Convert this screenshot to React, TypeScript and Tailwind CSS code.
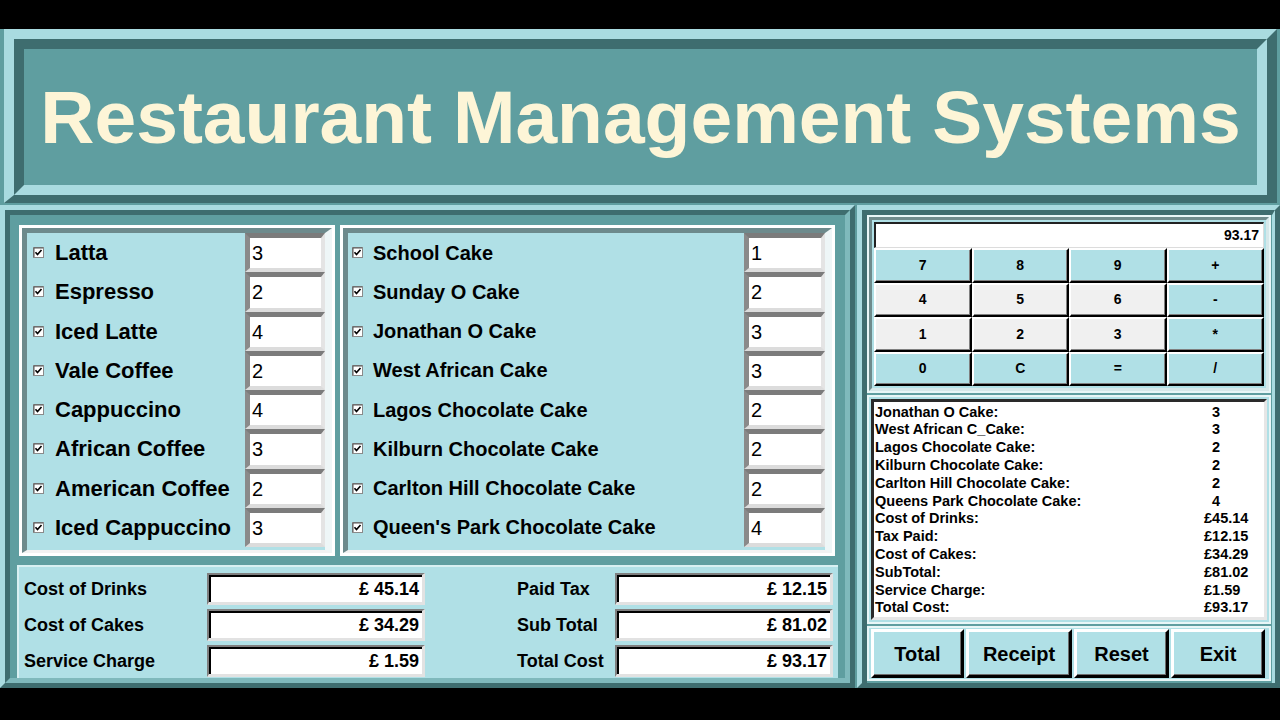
const drinks = [
  ['Latta', '3'],
  ['Espresso', '2'],
  ['Iced Latte', '4'],
  ['Vale Coffee', '2'],
  ['Cappuccino', '4'],
  ['African Coffee', '3'],
  ['American Coffee', '2'],
  ['Iced Cappuccino', '3'],
]

const cakes = [
  ['School Cake', '1'],
  ['Sunday O Cake', '2'],
  ['Jonathan O Cake', '3'],
  ['West African Cake', '3'],
  ['Lagos Chocolate Cake', '2'],
  ['Kilburn Chocolate Cake', '2'],
  ['Carlton Hill Chocolate Cake', '2'],
  ["Queen's Park Chocolate Cake", '4'],
]

const receipt = [
  ['Jonathan O Cake:', '3', true],
  ['West African C_Cake:', '3', true],
  ['Lagos Chocolate Cake:', '2', true],
  ['Kilburn Chocolate Cake:', '2', true],
  ['Carlton Hill Chocolate Cake:', '2', true],
  ['Queens Park Chocolate Cake:', '4', true],
  ['Cost of Drinks:', '£45.14', false],
  ['Tax Paid:', '£12.15', false],
  ['Cost of Cakes:', '£34.29', false],
  ['SubTotal:', '£81.02', false],
  ['Service Charge:', '£1.59', false],
  ['Total Cost:', '£93.17', false],
] as const

const calcKeys = [
  ['7', 'blue'],
  ['8', 'blue'],
  ['9', 'blue'],
  ['+', 'blue'],
  ['4', 'gray'],
  ['5', 'gray'],
  ['6', 'gray'],
  ['-', 'blue'],
  ['1', 'gray'],
  ['2', 'gray'],
  ['3', 'gray'],
  ['*', 'blue'],
  ['0', 'blue'],
  ['C', 'blue'],
  ['=', 'blue'],
  ['/', 'blue'],
]

const Tick = () => (
  <svg width="11" height="11" viewBox="0 0 11 11" className="shrink-0">
    <rect x="0.5" y="0.5" width="10" height="10" fill="#ffffff" stroke="#8a8a8a" />
    <path d="M1 1h9M1 1v9" stroke="#555" strokeWidth="1" />
    <path d="M2.5 5.2 L4.5 7.5 L8.5 3" fill="none" stroke="#000" strokeWidth="1.6" />
  </svg>
)

const QtyEntry = ({ value, w }: { value: string; w: string }) => (
  <div
    className={`${w} h-full shrink-0 border-t-[5px] border-l-[5px] border-b-[4px] border-r-[4px] border-t-[#7b7b7b] border-l-[#8a8a8a] border-b-[#dcdcdc] border-r-[#e4e4e4] bg-white flex items-center pl-[2px] text-[20px] text-black`}
  >
    {value}
  </div>
)

const ItemFrame = ({
  items,
  width,
  labelSize,
  entryW,
  boxGap,
  labelGap,
}: {
  items: string[][]
  width: string
  labelSize: string
  entryW: string
  boxGap: string
  labelGap: string
}) => (
  <div className={`${width} h-[331px] border-[3px] border-white bg-[#b0e0e6]`}>
    <div className="h-full border-t-[5px] border-l-[5px] border-b-[3px] border-r-[7px] border-t-[#6d8a8c] border-l-[#6d8a8c] border-b-[#f2f2f2] border-r-[#eef6f7] pb-[2px]">
      {items.map(([name, qty]) => (
        <div key={name} className="h-[39.25px] flex items-center">
          <div className={boxGap}>
            <Tick />
          </div>
          <div className={`${labelGap} flex-1 font-bold ${labelSize} text-black whitespace-nowrap`}>{name}</div>
          <QtyEntry value={qty} w={entryW} />
        </div>
      ))}
    </div>
  </div>
)

const CostEntry = ({ value }: { value: string }) => (
  <div className="w-[218px] h-[32px] border-t-[2px] border-l-[2px] border-b-[3px] border-r-[3px] border-t-[#7f7f7f] border-l-[#7f7f7f] border-b-[#e2e2e2] border-r-[#e2e2e2]">
    <div className="h-full border-t-[2px] border-l-[2px] border-black bg-white flex items-center justify-end pr-[3px] font-bold text-[18px] text-black">
      {value}
    </div>
  </div>
)

const CostRow = ({ label, value, labelW }: { label: string; value: string; labelW: string }) => (
  <div className="flex items-center h-[32px]">
    <div className={`${labelW} font-bold text-[18px] text-black whitespace-nowrap`}>{label}</div>
    <CostEntry value={value} />
  </div>
)

export default function App() {
  return (
    <div className="w-[1280px] h-[720px] bg-black overflow-hidden font-['Liberation_Sans',Arial,sans-serif]">
      <div className="h-[29px]" />
      <div className="h-[659px] bg-[#5f9ea0] flex flex-col">
        {/* header */}
        <div className="ml-[4px] w-[1273px] h-[174px] border-[10px] border-t-[#a9dbe0] border-l-[#a9dbe0] border-b-[#3e6d6f] border-r-[#3e6d6f] border-b-[8px]">
          <div className="h-full border-[10px] border-t-[#3e6d6f] border-l-[#3e6d6f] border-b-[#a9dbe0] border-r-[#a9dbe0] bg-[#5f9ea0] flex items-center justify-center">
            <h1 className="text-[75px] leading-none font-bold text-[#fdf5d7] whitespace-nowrap">
              Restaurant Management Systems
            </h1>
          </div>
        </div>

        <div className="mt-[2px] flex h-[483px]">
          {/* left frame */}
          <div className="w-[855px] h-full border-[5px] border-t-[#a9dbe0] border-l-[#a9dbe0] border-b-[#3e6d6f] border-r-[#3e6d6f]">
            <div className="h-full border-[5px] border-t-[#3e6d6f] border-l-[#3e6d6f] border-b-[#7fb9bc] border-r-[#7fb9bc] bg-[#5f9ea0] pt-[10px]">
              <div className="flex gap-[5px] pl-[9px]">
                <ItemFrame
                  items={drinks}
                  width="w-[316px]"
                  labelSize="text-[22px]"
                  entryW="w-[80px]"
                  boxGap="ml-[6px]"
                  labelGap="ml-[11px]"
                />
                <ItemFrame
                  items={cakes}
                  width="w-[495px]"
                  labelSize="text-[20px]"
                  entryW="w-[81px]"
                  boxGap="ml-[4px]"
                  labelGap="ml-[10px]"
                />
              </div>
              <div className="mt-[9px] ml-[7px] w-[821px] h-[113px] border-t-[2px] border-l-[2px] border-t-[#d8f0f2] border-l-[#d8f0f2] bg-[#b0e0e6] pt-[6px] pl-[5px] flex">
                <div className="flex flex-col gap-[4px]">
                  <CostRow label="Cost of Drinks" value="£ 45.14" labelW="w-[183px]" />
                  <CostRow label="Cost of Cakes" value="£ 34.29" labelW="w-[183px]" />
                  <CostRow label="Service Charge" value="£ 1.59" labelW="w-[183px]" />
                </div>
                <div className="ml-[92px] flex flex-col gap-[4px]">
                  <CostRow label="Paid Tax" value="£ 12.15" labelW="w-[98px]" />
                  <CostRow label="Sub Total" value="£ 81.02" labelW="w-[98px]" />
                  <CostRow label="Total Cost" value="£ 93.17" labelW="w-[98px]" />
                </div>
              </div>
            </div>
          </div>

          {/* right frame */}
          <div className="ml-[2px] w-[423px] h-full border-[5px] border-t-[#a9dbe0] border-l-[#a9dbe0] border-b-[#3e6d6f] border-r-[#3e6d6f]">
            <div className="h-full border-t-[5px] border-l-[5px] border-r-[3px] border-t-[#3e6d6f] border-l-[#3e6d6f] border-r-[#a9dbe0] bg-[#5f9ea0] flex flex-col gap-[2px] pb-[2px]">
              {/* calculator */}
              <div className="w-[404px] h-[178px] border-[2px] border-[#e8f6f7] bg-[#b0e0e6]">
                <div className="h-full border-[3px] border-t-[#6f8b8c] border-l-[#6f8b8c] border-b-[#d6e8ea] border-r-[#d6e8ea] p-[2px] flex flex-col">
                  <div className="h-[26px] border-t-[2px] border-l-[2px] border-b-[1px] border-r-[1px] border-t-[#222] border-l-[#222] border-b-[#dcdcdc] border-r-[#dcdcdc] bg-white flex items-center justify-end pr-[4px] font-bold text-[14px] text-black">
                    93.17
                  </div>
                  <div className="flex-1 grid grid-cols-4 grid-rows-4">
                    {calcKeys.map(([k, c]) => (
                      <div
                        key={k}
                        className={`border-t-[2px] border-l-[2px] border-b-[2px] border-r-[2px] border-t-white border-l-white border-b-black border-r-black shadow-[inset_-1px_-1px_0_#808080] flex items-center justify-center font-bold text-[14px] text-black ${
                          c === 'gray' ? 'bg-[#f0f0f0]' : 'bg-[#b0e0e6]'
                        }`}
                      >
                        {k}
                      </div>
                    ))}
                  </div>
                </div>
              </div>

              {/* receipt */}
              <div className="w-[404px] h-[229px] border-[2px] border-[#e8f6f7] bg-[#b0e0e6] p-[2px]">
                <div className="h-full border-[3px] border-t-[#2a2a2a] border-l-[#2a2a2a] border-b-[#e6e6e6] border-r-[#e6e6e6] bg-white pt-[1px] pl-[1px]">
                  {receipt.map(([label, value, isQty]) => (
                    <div key={label} className="flex h-[17.8px] items-center font-bold text-[14.5px] leading-none text-black whitespace-nowrap">
                      <div className="w-[329px]">{label}</div>
                      <div className={isQty ? 'pl-[8px]' : ''}>{value}</div>
                    </div>
                  ))}
                </div>
              </div>

              {/* action buttons */}
              <div className="w-[404px] flex-1 border-[2px] border-[#e8f6f7] bg-[#b0e0e6] px-[2px] py-[1px] flex gap-[2px]">
                {[
                  ['Total', 'w-[93px]'],
                  ['Receipt', 'w-[106px]'],
                  ['Reset', 'w-[95px]'],
                  ['Exit', 'w-[94px]'],
                ].map(([t, w]) => (
                  <div
                    key={t}
                    className={`${w} h-full border-t-[3px] border-l-[3px] border-b-[3px] border-r-[3px] border-t-white border-l-white border-b-black border-r-black shadow-[inset_-1px_-1px_0_#6d6d6d] bg-[#b0e0e6] flex items-center justify-center font-bold text-[20px] text-black`}
                  >
                    {t}
                  </div>
                ))}
              </div>
            </div>
          </div>
        </div>
      </div>
    </div>
  )
}
